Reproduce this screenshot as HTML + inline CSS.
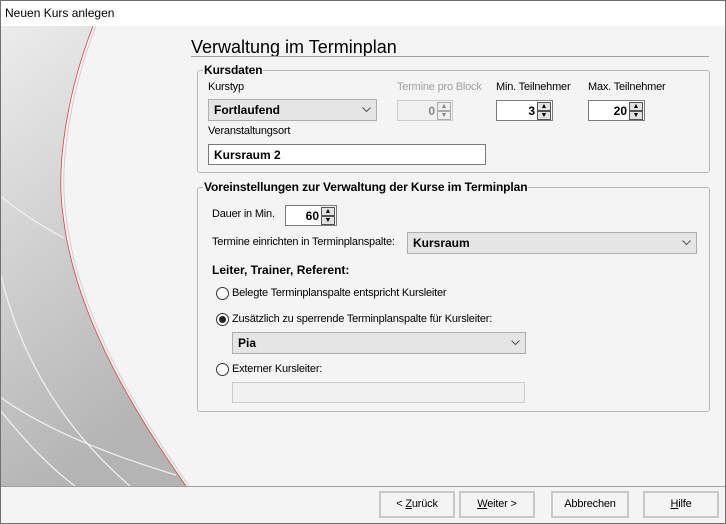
<!DOCTYPE html>
<html><head><meta charset="utf-8"><style>
*{margin:0;padding:0;box-sizing:border-box}
body{width:726px;height:524px;overflow:hidden;background:#f4f4f4;font-family:"Liberation Sans",sans-serif;font-size:11px;letter-spacing:-0.2px;color:#000;position:relative}
.a{position:absolute;white-space:nowrap}
.b{font-weight:bold;font-size:12px;letter-spacing:0}
.grp{position:absolute;border:1px solid #b9b9b9;border-radius:3px}
.lg{position:absolute;background:#f4f4f4;padding:0 1px;font-weight:bold;font-size:12px;letter-spacing:-0.1px}
.combo{position:absolute;background:#e5e5e5;border:1px solid #adadad;font-weight:bold;font-size:12px;letter-spacing:0;padding:3px 0 0 5px}
.combo svg{position:absolute;right:5px;top:7px}
.inp{position:absolute;background:#fff;border:1px solid #7a7a7a;font-weight:bold;font-size:12px;letter-spacing:0;padding:3px 0 0 5px}
.spin{position:absolute;background:#fff;border:1px solid #7a7a7a;font-weight:bold;font-size:12px;letter-spacing:0;text-align:right;padding:3px 17px 0 0}
.spin .bt{position:absolute;right:1px;width:14px;height:9px;background:#e1e1e1;border:1px solid #555;font-size:7px;line-height:7px;text-align:center;font-weight:normal}
.rad{position:absolute;width:13px;height:13px;border:1px solid #333;border-radius:50%;background:#fff}
.btn{position:absolute;top:491px;height:27px;width:76px;border:2px solid #c9c9c9;background:#f4f4f4;text-align:center;line-height:23px;font-size:11px}
</style></head><body>
<div class="a" style="left:0;top:0;width:726px;height:524px;border:1px solid #707070;border-top:none"></div>
<div class="a" style="left:0;top:0;width:726px;height:26px;background:#fff;border:1px solid #707070;border-bottom:none"></div>
<div class="a" style="left:5px;top:6px;font-size:12px;letter-spacing:0">Neuen Kurs anlegen</div>
<svg class="a" style="left:1px;top:26px" width="200" height="460" viewBox="1 26 200 460">
<defs><linearGradient id="g" x1="0" y1="0" x2="0.3" y2="1"><stop offset="0" stop-color="#ececec"/><stop offset="1" stop-color="#b4b4b4"/></linearGradient></defs>
<path d="M0,26 L93,26 C70,85 55,160 63,215 C75,320 140,420 186,486 L0,486Z" fill="url(#g)"/>
<path d="M93,26 C70,85 55,160 63,215 C75,320 140,420 186,486" fill="none" stroke="#e8384a" stroke-width="0.8"/>
<path d="M96,26 C73,85 58,160 66,215 C78,320 143,420 189,486" fill="none" stroke="#d0d0d0" stroke-width="1"/>
<g stroke="#f2f2f2" stroke-width="1.2" fill="none">
<path d="M0,196 Q30,220 64,238"/>
<path d="M0,272 Q30,400 130,486"/>
<path d="M0,397 Q60,440 176,475"/>
<path d="M0,410 Q40,460 75,486"/>
</g>
</svg>
<div class="a" style="left:191px;top:37px;font-size:18px;letter-spacing:0">Verwaltung im Terminplan</div>
<div class="a" style="left:191px;top:56px;width:518px;height:1px;background:#a0a0a0"></div>

<div class="grp" style="left:197px;top:70px;width:513px;height:103px"></div>
<div class="lg" style="left:203px;top:63px">Kursdaten</div>
<div class="a" style="left:208px;top:81px">Kurstyp</div>
<div class="combo" style="left:208px;top:99px;width:169px;height:22px">Fortlaufend<svg width="9" height="6"><path d="M0.5,0.5 L4.5,4.5 L8.5,0.5" fill="none" stroke="#555"/></svg></div>
<div class="a" style="left:397px;top:81px;color:#a0a0a0">Termine pro Block</div>
<div class="spin" style="left:397px;top:100px;width:56px;height:21px;background:#f0f0f0;border-color:#ccc;color:#888">0<div class="bt" style="top:1px;border-color:#aaa;background:#eee">&#9650;</div><div class="bt" style="top:10px;border-color:#aaa;background:#eee">&#9660;</div></div>
<div class="a" style="left:496px;top:81px">Min. Teilnehmer</div>
<div class="spin" style="left:496px;top:100px;width:57px;height:21px">3<div class="bt" style="top:1px">&#9650;</div><div class="bt" style="top:10px">&#9660;</div></div>
<div class="a" style="left:588px;top:81px">Max. Teilnehmer</div>
<div class="spin" style="left:588px;top:100px;width:57px;height:21px">20<div class="bt" style="top:1px">&#9650;</div><div class="bt" style="top:10px">&#9660;</div></div>
<div class="a" style="left:208px;top:125px">Veranstaltungsort</div>
<div class="inp" style="left:208px;top:144px;width:278px;height:21px">Kursraum 2</div>

<div class="grp" style="left:197px;top:187px;width:513px;height:225px"></div>
<div class="lg" style="left:203px;top:180px">Voreinstellungen zur Verwaltung der Kurse im Terminplan</div>
<div class="a" style="left:212px;top:208px">Dauer in Min.</div>
<div class="spin" style="left:285px;top:205px;width:52px;height:21px">60<div class="bt" style="top:1px">&#9650;</div><div class="bt" style="top:10px">&#9660;</div></div>
<div class="a" style="left:212px;top:236px">Termine einrichten in Terminplanspalte:</div>
<div class="combo" style="left:407px;top:232px;width:290px;height:22px">Kursraum<svg width="9" height="6"><path d="M0.5,0.5 L4.5,4.5 L8.5,0.5" fill="none" stroke="#555"/></svg></div>
<div class="a b" style="left:212px;top:263px">Leiter, Trainer, Referent:</div>
<div class="rad" style="left:216px;top:287px"></div>
<div class="a" style="left:232px;top:287px">Belegte Terminplanspalte entspricht Kursleiter</div>
<div class="rad" style="left:216px;top:313px"><div style="position:absolute;left:2px;top:2px;width:7px;height:7px;border-radius:50%;background:#222"></div></div>
<div class="a" style="left:232px;top:313px">Zusätzlich zu sperrende Terminplanspalte für Kursleiter:</div>
<div class="combo" style="left:232px;top:332px;width:294px;height:22px">Pia<svg width="9" height="6"><path d="M0.5,0.5 L4.5,4.5 L8.5,0.5" fill="none" stroke="#555"/></svg></div>
<div class="rad" style="left:216px;top:363px"></div>
<div class="a" style="left:232px;top:363px">Externer Kursleiter:</div>
<div class="a" style="left:232px;top:382px;width:293px;height:21px;background:#f0f0f0;border:1px solid #ccc"></div>

<div class="a" style="left:1px;top:486px;width:724px;height:1px;background:#a0a0a0"></div>
<div class="btn" style="left:379px">&lt; <u>Z</u>urück</div>
<div class="btn" style="left:459px"><u>W</u>eiter &gt;</div>
<div class="btn" style="left:551px;width:78px">Abbrechen</div>
<div class="btn" style="left:643px"><u>H</u>ilfe</div>
</body></html>
